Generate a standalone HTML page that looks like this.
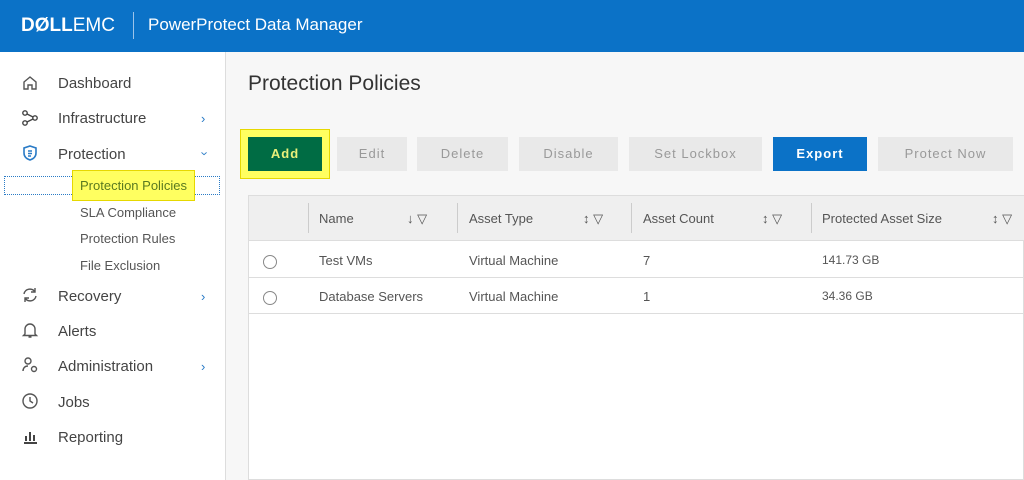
<!DOCTYPE html><html><head><style>
*{margin:0;padding:0;box-sizing:border-box}
body{width:1024px;height:480px;overflow:hidden;font-family:"Liberation Sans",sans-serif;background:#f7f7f7;position:relative;color:#333}
.a{position:absolute}
.hdr{left:0;top:0;width:1024px;height:52px;background:#0b72c7;color:#fff}
.side{left:0;top:52px;width:226px;height:428px;background:#fff;border-right:1px solid #ddd}
.nav{left:58px;font-size:15px;color:#444;margin-top:2px}
.sub{left:80px;font-size:13px;color:#555}
.ico{left:21px;width:18px;height:18px}
.chev{left:201px;font-size:13px;color:#2a7bc6;margin-top:2px}
.btn{top:137px;height:34px;background:#e9e9e9;color:#999;font-size:13px;letter-spacing:1px;text-align:center;line-height:34px}
.th{top:211px;font-size:13px;color:#555}
.td{font-size:13px;color:#555}
.sep{top:203px;width:1px;height:30px;background:#ccc}
.rad{left:263px;width:14px;height:14px;border:1px solid #888;border-radius:50%;background:#fff}
</style></head><body>
<div class="a hdr">
<div class="a" style="left:21px;top:15px;font-size:19px;font-weight:bold;letter-spacing:0px">DØLL<span style="font-weight:normal">EMC</span></div>
<div class="a" style="left:133px;top:12px;width:1px;height:27px;background:#9cc4ea"></div>
<div class="a" style="left:148px;top:15px;font-size:17px">PowerProtect Data Manager</div>
</div>
<div class="a side"></div>
<svg class="a ico" style="top:74px" viewBox="0 0 18 18" fill="none" stroke="#555" stroke-width="1.4"><path d="M3 8L9 3l6 5v7H11v-4H7v4H3z"/></svg>
<div class="a nav" style="top:73px">Dashboard</div>
<svg class="a ico" style="top:109px" viewBox="0 0 18 18" fill="none" stroke="#444" stroke-width="1.4"><circle cx="4" cy="4" r="2.2"/><circle cx="4" cy="14" r="2.2"/><circle cx="14" cy="9" r="2.2"/><path d="M6 5l6 3M6 13l6-3"/></svg>
<div class="a nav" style="top:108px">Infrastructure</div><div class="a chev" style="top:109px">›</div>
<svg class="a ico" style="top:144px" viewBox="0 0 18 18" fill="none" stroke="#2a7bc6" stroke-width="1.6"><path d="M9 2l6 2v5c0 4-3 6-6 7-3-1-6-3-6-7V4z"/><path d="M7 7h4M7 9.5h4M7 12h3"/></svg>
<div class="a nav" style="top:144px">Protection</div><div class="a chev" style="top:144px;transform:rotate(90deg);left:203px">›</div>
<div class="a" style="left:4px;top:176px;width:216px;height:19px;border:1px dotted #2a7bc6"></div>
<div class="a" style="left:72px;top:170px;width:123px;height:31px;background:#ffff60;border:1px solid #e6d800"></div>
<div class="a sub" style="top:178px;color:#5a7a20">Protection Policies</div>
<div class="a sub" style="top:205px">SLA Compliance</div>
<div class="a sub" style="top:231px">Protection Rules</div>
<div class="a sub" style="top:258px">File Exclusion</div>
<svg class="a ico" style="top:286px" viewBox="0 0 18 18" fill="none" stroke="#555" stroke-width="1.4"><path d="M14 6A6 6 0 0 0 3 8M4 12a6 6 0 0 0 11-2M14 2v4h-4M4 16v-4h4"/></svg>
<div class="a nav" style="top:286px">Recovery</div><div class="a chev" style="top:287px">›</div>
<svg class="a ico" style="top:321px" viewBox="0 0 18 18" fill="none" stroke="#555" stroke-width="1.4"><path d="M4 13V8a5 5 0 0 1 10 0v5l1.5 1.5h-13zM7.5 16h3"/></svg>
<div class="a nav" style="top:321px">Alerts</div>
<svg class="a ico" style="top:356px" viewBox="0 0 18 18" fill="none" stroke="#555" stroke-width="1.4"><circle cx="7" cy="5" r="3"/><path d="M2 15c0-3 2-5 5-5"/><circle cx="13" cy="13" r="2.5"/></svg>
<div class="a nav" style="top:356px">Administration</div><div class="a chev" style="top:357px">›</div>
<svg class="a ico" style="top:392px" viewBox="0 0 18 18" fill="none" stroke="#555" stroke-width="1.4"><circle cx="9" cy="9" r="7"/><path d="M9 5v4l3 2"/></svg>
<div class="a nav" style="top:392px">Jobs</div>
<svg class="a ico" style="top:427px" viewBox="0 0 18 18" fill="none" stroke="#444" stroke-width="2"><path d="M3 16h13M5 14V9M9 14V5M13 14V8"/></svg>
<div class="a nav" style="top:427px">Reporting</div>

<div class="a" style="left:248px;top:72px;font-size:21px;color:#333">Protection Policies</div>
<div class="a" style="left:240px;top:129px;width:90px;height:50px;background:#ffff60;border:1px solid #e6d800"></div>
<div class="a btn" style="left:248px;width:74px;background:#006c44;color:#e8f07a;font-weight:bold">Add</div>
<div class="a btn" style="left:337px;width:70px">Edit</div>
<div class="a btn" style="left:417px;width:91px">Delete</div>
<div class="a btn" style="left:519px;width:99px">Disable</div>
<div class="a btn" style="left:629px;width:133px">Set Lockbox</div>
<div class="a btn" style="left:773px;width:94px;background:#0b72c7;color:#fff;font-weight:bold">Export</div>
<div class="a btn" style="left:878px;width:135px">Protect Now</div>

<div class="a" style="left:248px;top:195px;width:776px;height:285px;background:#fff;border:1px solid #ddd"></div>
<div class="a" style="left:249px;top:196px;width:775px;height:45px;background:#efefef;border-bottom:1px solid #ddd"></div>
<div class="a sep" style="left:308px"></div><div class="a sep" style="left:457px"></div><div class="a sep" style="left:631px"></div><div class="a sep" style="left:811px"></div>
<div class="a th" style="left:319px">Name</div><div class="a th" style="left:407px">↓ ▽</div>
<div class="a th" style="left:469px">Asset Type</div><div class="a th" style="left:583px">↕ ▽</div>
<div class="a th" style="left:643px">Asset Count</div><div class="a th" style="left:762px">↕ ▽</div>
<div class="a th" style="left:822px">Protected Asset Size</div><div class="a th" style="left:992px">↕ ▽</div>
<div class="a" style="left:249px;top:277px;width:775px;height:1px;background:#ddd"></div>
<div class="a" style="left:249px;top:313px;width:775px;height:1px;background:#ddd"></div>
<div class="a rad" style="top:255px"></div><div class="a rad" style="top:291px"></div>
<div class="a td" style="left:319px;top:253px">Test VMs</div><div class="a td" style="left:469px;top:253px">Virtual Machine</div><div class="a td" style="left:643px;top:253px">7</div><div class="a td" style="left:822px;top:253px;font-size:12px">141.73 GB</div>
<div class="a td" style="left:319px;top:289px">Database Servers</div><div class="a td" style="left:469px;top:289px">Virtual Machine</div><div class="a td" style="left:643px;top:289px">1</div><div class="a td" style="left:822px;top:289px;font-size:12px">34.36 GB</div>
</body></html>
